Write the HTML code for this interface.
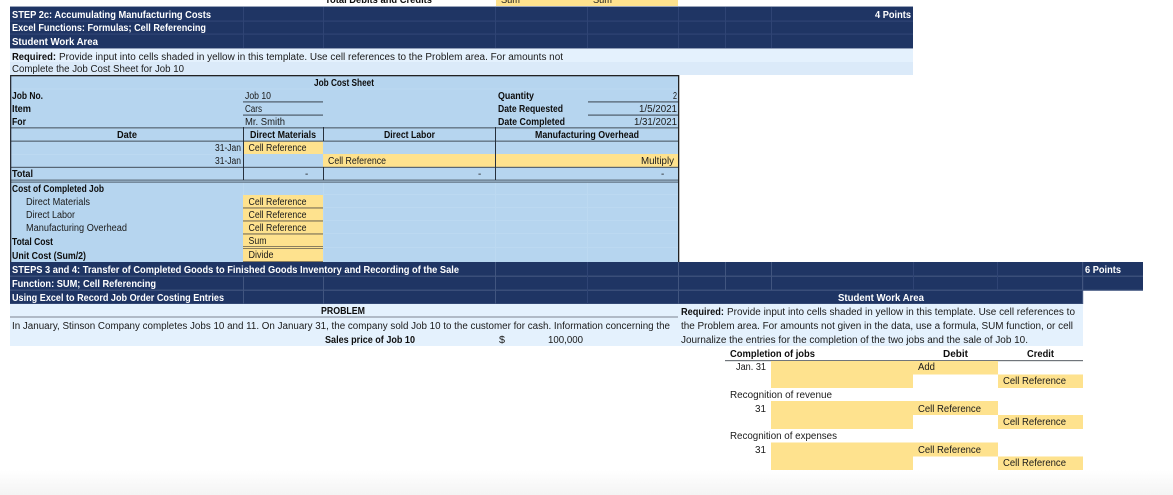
<!DOCTYPE html>
<html><head><meta charset="utf-8"><style>
html,body{margin:0;padding:0;background:#fff;width:1173px;height:495px;overflow:hidden}
svg{display:block}
text{font-family:"Liberation Sans",sans-serif;font-size:9.9px;fill:#1a1a1a}
.b{font-weight:bold;fill:#111;font-size:9.7px}
.w{font-weight:bold;fill:#fff;font-size:9.7px}
</style></head><body>
<svg width="1173" height="495" viewBox="0 0 1173 495" xmlns="http://www.w3.org/2000/svg">
<defs>
<linearGradient id="g" x1="0" y1="0" x2="0" y2="1"><stop offset="0" stop-color="#fff"/><stop offset="1" stop-color="#f4f4f4"/></linearGradient>
<filter id="s" x="-2%" y="-20%" width="104%" height="140%"><feGaussianBlur stdDeviation="0.25"/></filter>
</defs>
<rect width="1173" height="495" fill="#fff"/>
<rect y="470" width="1173" height="25" fill="url(#g)"/>

<!-- top strip -->
<rect x="496" y="0" width="182" height="6.5" fill="#fee28e"/>
<rect x="10" y="6" width="903" height="1.2" fill="#9aa5bb"/>

<!-- top navy -->
<rect x="10" y="7" width="903" height="41" fill="#1f3564"/>
<g fill="#2f4474">
<rect x="10" y="20.5" width="903" height="1.2"/><rect x="10" y="33.5" width="903" height="1.2"/>
<rect x="243" y="7" width="1" height="41"/><rect x="323" y="7" width="1" height="41"/><rect x="495" y="7" width="1" height="41"/><rect x="587" y="7" width="1" height="41"/><rect x="678" y="7" width="1" height="41"/><rect x="725" y="7" width="1" height="41"/><rect x="771" y="7" width="1" height="41"/>
</g>
<rect x="10" y="48" width="903" height="1" fill="#8f9db8"/>
<rect x="10" y="49" width="903" height="13" fill="#e4f1fd"/>
<rect x="10" y="62" width="903" height="13" fill="#dbeaf9"/>

<!-- job cost sheet -->
<rect x="10" y="75" width="669" height="187" fill="#b6d5ef"/>
<g fill="#bcd9f1">
<rect x="11" y="88.5" width="667" height="1"/><rect x="11" y="154" width="232" height="1"/>
<rect x="324" y="194" width="354" height="1"/><rect x="324" y="207" width="354" height="1"/><rect x="324" y="220" width="354" height="1"/><rect x="324" y="233" width="354" height="1"/><rect x="324" y="247" width="354" height="1"/>
<rect x="243" y="182" width="1" height="13"/><rect x="323" y="182" width="1" height="80"/><rect x="495" y="182" width="1" height="80"/><rect x="587" y="182" width="1" height="80"/>
</g>
<rect x="243" y="141" width="80" height="13" fill="#fee28e"/>
<rect x="323" y="154" width="355" height="13" fill="#fee28e"/>
<rect x="243" y="195" width="80" height="67" fill="#fee28e"/>
<g fill="#8b7f5e">
<rect x="243" y="207.3" width="80" height="1.3"/><rect x="243" y="220.3" width="80" height="1.3"/><rect x="243" y="233.3" width="80" height="1.3"/>
<rect x="243" y="246" width="80" height="1"/><rect x="243" y="248" width="80" height="1"/><rect x="243" y="261" width="80" height="1"/>
</g>
<g fill="#4d5a68">
<rect x="243" y="101.3" width="80" height="1.2"/><rect x="243" y="114.5" width="80" height="1.2"/>
<rect x="588" y="101.3" width="90" height="1.2"/><rect x="588" y="114.5" width="90" height="1.2"/>
<rect x="11" y="127.3" width="667" height="1.1"/><rect x="11" y="140.6" width="667" height="1.1"/><rect x="11" y="166.8" width="667" height="1.1"/>
<rect x="11" y="179.6" width="667" height="1"/><rect x="11" y="181.6" width="667" height="1"/>
</g>
<g fill="#26303c">
<rect x="243" y="127" width="1" height="53"/><rect x="323" y="127" width="1" height="14"/><rect x="323" y="167" width="1" height="13"/><rect x="495" y="127" width="1" height="53"/>
</g>
<rect x="10" y="75" width="669" height="1.3" fill="#222"/>
<rect x="10" y="75" width="1.3" height="187" fill="#2a2f38"/>
<rect x="678" y="75" width="1.3" height="187" fill="#222"/>

<!-- second navy -->
<rect x="10" y="262" width="1073" height="42" fill="#1f3564"/>
<rect x="1083" y="262" width="60" height="28" fill="#1f3564"/>
<g fill="#41557f">
<rect x="10" y="275.6" width="1133" height="1.2"/><rect x="10" y="289.6" width="1133" height="1.2"/><rect x="10" y="303.4" width="1073" height="1"/>
<rect x="243" y="276" width="1" height="28"/><rect x="323" y="276" width="1" height="28"/><rect x="495" y="262" width="1" height="42"/><rect x="678" y="262" width="1" height="42"/><rect x="725" y="262" width="1" height="28"/><rect x="771" y="262" width="1" height="28"/><rect x="1082" y="262" width="1.2" height="42"/>
</g>
<g fill="#2f4474">
<rect x="587" y="262" width="1" height="42"/><rect x="913" y="262" width="1" height="28"/><rect x="997" y="262" width="1" height="28"/>
</g>

<!-- problem / required -->
<rect x="10" y="304" width="1073" height="42" fill="#e4f1fd"/>
<rect x="10" y="316.4" width="668" height="1.2" fill="#8d97a3"/>

<!-- journal -->
<rect x="725" y="360" width="358" height="1.2" fill="#70757b"/>
<g fill="#fee28e">
<rect x="771" y="361" width="142" height="27"/><rect x="913" y="361" width="85" height="13.5"/><rect x="998" y="374.5" width="85" height="13.5"/>
<rect x="771" y="401" width="142" height="28"/><rect x="913" y="401" width="85" height="14"/><rect x="998" y="415" width="85" height="14"/>
<rect x="771" y="442.5" width="142" height="27.5"/><rect x="913" y="442.5" width="85" height="14"/><rect x="998" y="456.5" width="85" height="13.5"/>
</g>

<g filter="url(#s)">
<text class="b" x="325" y="3" textLength="107" lengthAdjust="spacingAndGlyphs">Total Debits and Credits</text>
<text x="501" y="3" textLength="19" lengthAdjust="spacingAndGlyphs">Sum</text>
<text x="593" y="3" textLength="19" lengthAdjust="spacingAndGlyphs">Sum</text>

<text class="w" x="12" y="18" textLength="199" lengthAdjust="spacingAndGlyphs">STEP 2c:  Accumulating Manufacturing Costs</text>
<text class="w" x="12" y="31" textLength="194" lengthAdjust="spacingAndGlyphs">Excel Functions: Formulas; Cell Referencing</text>
<text class="w" x="12" y="45" textLength="86" lengthAdjust="spacingAndGlyphs">Student Work Area</text>
<text class="w" x="875" y="18" textLength="36" lengthAdjust="spacingAndGlyphs">4 Points</text>

<text class="b" x="12" y="60" textLength="44" lengthAdjust="spacingAndGlyphs">Required:</text>
<text x="59" y="60" textLength="504" lengthAdjust="spacingAndGlyphs">Provide input into cells shaded in yellow in this template. Use cell references to the Problem area. For amounts not</text>
<text x="12" y="72" textLength="172" lengthAdjust="spacingAndGlyphs">Complete the Job Cost Sheet for Job 10</text>

<text class="b" x="314" y="86" textLength="60" lengthAdjust="spacingAndGlyphs">Job Cost Sheet</text>
<text class="b" x="12" y="99" textLength="31" lengthAdjust="spacingAndGlyphs">Job No.</text>
<text x="245" y="99" textLength="26" lengthAdjust="spacingAndGlyphs">Job 10</text>
<text class="b" x="498" y="99" textLength="36" lengthAdjust="spacingAndGlyphs">Quantity</text>
<text x="673" y="99" textLength="4" lengthAdjust="spacingAndGlyphs">2</text>
<text class="b" x="12" y="112" textLength="19" lengthAdjust="spacingAndGlyphs">Item</text>
<text x="245" y="112" textLength="17" lengthAdjust="spacingAndGlyphs">Cars</text>
<text class="b" x="498" y="112" textLength="65" lengthAdjust="spacingAndGlyphs">Date Requested</text>
<text x="639" y="112" textLength="38" lengthAdjust="spacingAndGlyphs">1/5/2021</text>
<text class="b" x="12" y="125" textLength="14" lengthAdjust="spacingAndGlyphs">For</text>
<text x="245" y="125" textLength="40" lengthAdjust="spacingAndGlyphs">Mr. Smith</text>
<text class="b" x="498" y="125" textLength="67" lengthAdjust="spacingAndGlyphs">Date Completed</text>
<text x="634" y="125" textLength="43" lengthAdjust="spacingAndGlyphs">1/31/2021</text>

<text class="b" x="117" y="138" textLength="20" lengthAdjust="spacingAndGlyphs">Date</text>
<text class="b" x="250" y="138" textLength="66" lengthAdjust="spacingAndGlyphs">Direct Materials</text>
<text class="b" x="384" y="138" textLength="51" lengthAdjust="spacingAndGlyphs">Direct Labor</text>
<text class="b" x="535" y="138" textLength="104" lengthAdjust="spacingAndGlyphs">Manufacturing Overhead</text>

<text x="215" y="151" textLength="26" lengthAdjust="spacingAndGlyphs">31-Jan</text>
<text x="248.500" y="151" textLength="58" lengthAdjust="spacingAndGlyphs">Cell Reference</text>
<text x="215" y="164" textLength="26" lengthAdjust="spacingAndGlyphs">31-Jan</text>
<text x="328" y="164" textLength="58" lengthAdjust="spacingAndGlyphs">Cell Reference</text>
<text x="641" y="164" textLength="33" lengthAdjust="spacingAndGlyphs">Multiply</text>

<text class="b" x="12" y="177" textLength="21" lengthAdjust="spacingAndGlyphs">Total</text>
<text x="305" y="177">-</text>
<text x="478" y="177">-</text>
<text x="661" y="177">-</text>

<text class="b" x="12" y="192" textLength="92" lengthAdjust="spacingAndGlyphs">Cost of Completed Job</text>
<text x="26" y="205" textLength="64" lengthAdjust="spacingAndGlyphs">Direct Materials</text>
<text x="26" y="218" textLength="49" lengthAdjust="spacingAndGlyphs">Direct Labor</text>
<text x="26" y="231" textLength="101" lengthAdjust="spacingAndGlyphs">Manufacturing Overhead</text>
<text class="b" x="12" y="245" textLength="41" lengthAdjust="spacingAndGlyphs">Total Cost</text>
<text class="b" x="12" y="259" textLength="74" lengthAdjust="spacingAndGlyphs">Unit Cost (Sum/2)</text>
<text x="248.500" y="205" textLength="58" lengthAdjust="spacingAndGlyphs">Cell Reference</text>
<text x="248.500" y="218" textLength="58" lengthAdjust="spacingAndGlyphs">Cell Reference</text>
<text x="248.500" y="231" textLength="58" lengthAdjust="spacingAndGlyphs">Cell Reference</text>
<text x="248.500" y="244" textLength="18" lengthAdjust="spacingAndGlyphs">Sum</text>
<text x="248.500" y="258" textLength="25" lengthAdjust="spacingAndGlyphs">Divide</text>

<text class="w" x="12" y="273" textLength="447" lengthAdjust="spacingAndGlyphs">STEPS 3 and 4:  Transfer of Completed Goods to Finished Goods Inventory and Recording of the Sale</text>
<text class="w" x="12" y="287" textLength="144" lengthAdjust="spacingAndGlyphs">Function: SUM; Cell Referencing</text>
<text class="w" x="12" y="301" textLength="212" lengthAdjust="spacingAndGlyphs">Using Excel to Record Job Order Costing Entries</text>
<text class="w" x="1085" y="273" textLength="36" lengthAdjust="spacingAndGlyphs">6 Points</text>
<text class="w" x="838" y="301" textLength="86" lengthAdjust="spacingAndGlyphs">Student Work Area</text>

<text class="b" x="321" y="314" textLength="44" lengthAdjust="spacingAndGlyphs">PROBLEM</text>
<text x="12" y="329" textLength="658" lengthAdjust="spacingAndGlyphs">In January, Stinson Company completes Jobs 10 and 11. On January 31, the company sold Job 10 to the customer for cash. Information concerning the</text>
<text class="b" x="325" y="343" textLength="90" lengthAdjust="spacingAndGlyphs">Sales price of Job 10</text>
<text x="499" y="343" textLength="6" lengthAdjust="spacingAndGlyphs">$</text>
<text x="548" y="343" textLength="35" lengthAdjust="spacingAndGlyphs">100,000</text>

<text class="b" x="681" y="315" textLength="43" lengthAdjust="spacingAndGlyphs">Required:</text>
<text x="727" y="315" textLength="348" lengthAdjust="spacingAndGlyphs">Provide input into cells shaded in yellow in this template. Use cell references to</text>
<text x="681" y="329" textLength="392" lengthAdjust="spacingAndGlyphs">the Problem area. For amounts not given in the data, use a formula, SUM function, or cell</text>
<text x="681" y="343" textLength="347" lengthAdjust="spacingAndGlyphs">Journalize the entries for the completion of the two jobs and the sale of Job 10.</text>

<text class="b" x="730" y="357" textLength="85" lengthAdjust="spacingAndGlyphs">Completion of jobs</text>
<text class="b" x="943" y="357" textLength="25" lengthAdjust="spacingAndGlyphs">Debit</text>
<text class="b" x="1027" y="357" textLength="27" lengthAdjust="spacingAndGlyphs">Credit</text>
<text x="736" y="370" textLength="30" lengthAdjust="spacingAndGlyphs">Jan. 31</text>
<text x="918" y="370" textLength="17" lengthAdjust="spacingAndGlyphs">Add</text>
<text x="1003" y="384" textLength="63" lengthAdjust="spacingAndGlyphs">Cell Reference</text>
<text x="730" y="398" textLength="102" lengthAdjust="spacingAndGlyphs">Recognition of revenue</text>
<text x="755" y="412" textLength="11" lengthAdjust="spacingAndGlyphs">31</text>
<text x="918" y="412" textLength="63" lengthAdjust="spacingAndGlyphs">Cell Reference</text>
<text x="1003" y="425" textLength="63" lengthAdjust="spacingAndGlyphs">Cell Reference</text>
<text x="730" y="439" textLength="107" lengthAdjust="spacingAndGlyphs">Recognition of expenses</text>
<text x="755" y="453" textLength="11" lengthAdjust="spacingAndGlyphs">31</text>
<text x="918" y="453" textLength="63" lengthAdjust="spacingAndGlyphs">Cell Reference</text>
<text x="1003" y="466" textLength="63" lengthAdjust="spacingAndGlyphs">Cell Reference</text>
</g>
</svg>
</body></html>
